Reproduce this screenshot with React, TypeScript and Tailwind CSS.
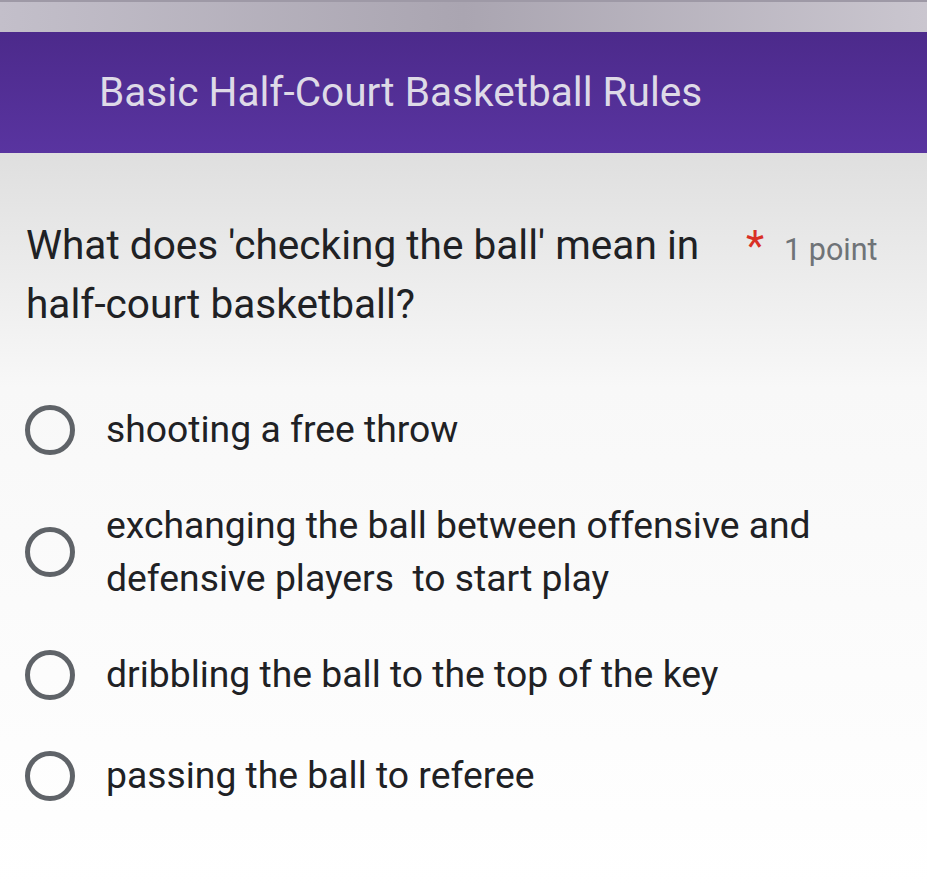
import React from "react";

const options = [
    "shooting a free throw",
    "exchanging the ball between offensive and defensive players  to start play",
    "dribbling the ball to the top of the key",
    "passing the ball to referee",
];

const Radio = () => (
    <div className="shrink-0 w-[50px] h-[50px] rounded-full border-[5px] border-[#5f6368]" />
);

export default function App() {
    return (
        <div className="w-full h-[887px] flex flex-col bg-white font-['Roboto',sans-serif] overflow-hidden">
            {/* top strip */}
            <div className="h-[32px] shrink-0 bg-gradient-to-r from-[#c3bfca] via-[#aaa5b1] to-[#cac6cf] border-t-2 border-[#9e99a6]" />

            {/* purple header */}
            <div className="h-[121px] shrink-0 flex items-center pl-[99px] bg-gradient-to-b from-[#4c2a8b] to-[#5934a0]">
                <h1 className="text-[40.6px] leading-none text-[#dedae7]">
                    Basic Half-Court Basketball Rules
                </h1>
            </div>

            {/* body */}
            <div className="flex-1 bg-gradient-to-b from-[#dfdfdf] via-[#f8f8f8] via-[32%] to-white">
                <div className="flex items-start pl-[26px] pt-[63px]">
                    <p className="w-[720px] text-[40.6px] leading-[59px] text-[#202124]">
                        What does 'checking the ball' mean in half-court basketball?
                    </p>
                    <div className="flex items-baseline">
                        <span className="text-[#d93025] text-[42px] leading-[59px]">*</span>
                        <span className="ml-[20px] text-[30.5px] text-[#6f7377]">1 point</span>
                    </div>
                </div>

                <div className="flex flex-col pl-[25px] pt-[45px] pr-[40px]">
                    {options.map((o) => (
                        <div key={o} className="flex items-center gap-[31px] min-h-[101px] py-[19px]">
                            <Radio />
                            <span className="text-[37.3px] leading-[53px] text-[#202124] whitespace-pre-wrap">
                                {o}
                            </span>
                        </div>
                    ))}
                </div>
            </div>
        </div>
    );
}
